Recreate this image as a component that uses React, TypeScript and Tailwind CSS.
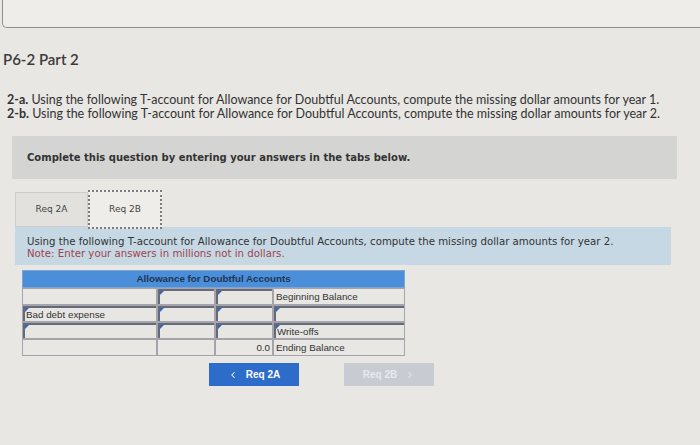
import { ChevronLeft, ChevronRight } from "lucide-react";

type Cell =
  | { kind: "blank" }
  | { kind: "input"; text?: string }
  | { kind: "label"; text: string }
  | { kind: "value"; text: string };

const rows: Cell[][] = [
  [{ kind: "blank" }, { kind: "input" }, { kind: "input" }, { kind: "label", text: "Beginning Balance" }],
  [{ kind: "input", text: "Bad debt expense" }, { kind: "input" }, { kind: "input" }, { kind: "input" }],
  [{ kind: "input" }, { kind: "input" }, { kind: "input" }, { kind: "input", text: "Write-offs" }],
  [{ kind: "blank" }, { kind: "blank" }, { kind: "value", text: "0.0" }, { kind: "label", text: "Ending Balance" }],
];

const colWidths = ["w-[135px]", "w-[58px]", "w-[58px]", "w-[132px]"];

function TCell({ cell, width }: { cell: Cell; width: string }) {
  if (cell.kind === "input") {
    return (
      <div className={`${width} h-[17px] border border-[#a3a5ab]`}>
        <div className="relative h-full border-l-2 border-t-2 border-[#646a7a] bg-[#e7e6e3] pl-[1px] leading-[13px] text-[9.8px] text-[#333]">
          <span className="absolute left-0 top-0 w-0 h-0 border-t-[4px] border-t-[#3b64b8] border-r-[4px] border-r-transparent" />
          {cell.text}
        </div>
      </div>
    );
  }
  return (
    <div
      className={`${width} h-[17px] border border-[#a3a5ab] px-[2px] leading-[15px] text-[9.8px] text-[#333] ${
        cell.kind === "value" ? "text-right" : ""
      }`}
    >
      {cell.kind === "blank" ? "" : cell.text}
    </div>
  );
}

export default function App() {
  return (
    <div className="w-[700px] h-[445px] overflow-hidden bg-[#e8e7e3] font-['Lato',sans-serif] text-[#333]">
      <div className="h-[28px] ml-[2px] bg-[#eeede9] border-l border-b border-[#8e8e8e] rounded-bl-[5px]" />

      <h1 className="mt-[22px] pl-[3px] text-[15px] font-semibold text-[#3b3b3b] leading-[18px]">
        P6-2 Part 2
      </h1>

      <div className="mt-[25px] pl-[7px] text-[12.5px] leading-[14px] text-[#333]">
        <p>
          <b>2-a.</b> Using the following T-account for Allowance for Doubtful Accounts, compute the missing dollar amounts for year 1.
        </p>
        <p>
          <b>2-b.</b> Using the following T-account for Allowance for Doubtful Accounts, compute the missing dollar amounts for year 2.
        </p>
      </div>

      <div className="mt-[15px] ml-[12px] w-[665px] h-[43px] bg-[#d4d4d2] flex items-center pl-[15px] font-['DejaVu_Sans',sans-serif] text-[10px] font-bold text-[#333]">
        Complete this question by entering your answers in the tabs below.
      </div>

      <div className="mt-[11px] ml-[15px] flex items-end font-['DejaVu_Sans',sans-serif] text-[9px] text-[#444]">
        <div className="w-[73px] h-[35px] bg-[#e2e1dd] border border-[#cfceca] flex items-center justify-center">
          Req 2A
        </div>
        <div className="relative z-10 -mb-[2px] w-[74px] h-[39px] bg-[#eeede9] border-2 border-dotted border-[#7b7b80] flex items-center justify-center">
          Req 2B
        </div>
      </div>

      <div className="ml-[15px] w-[656px] h-[38px] bg-[#c6d8e4] pl-[12px] pt-[9px] font-['DejaVu_Sans',sans-serif] text-[10.2px] leading-[12px]">
        <p className="text-[#333]">
          Using the following T-account for Allowance for Doubtful Accounts, compute the missing dollar amounts for year 2.
        </p>
        <p className="text-[#a2434d]">Note: Enter your answers in millions not in dollars.</p>
      </div>

      <div className="mt-[5px] ml-[22px] w-[383px] font-['Liberation_Sans',Arial,sans-serif]">
        <div className="h-[18px] bg-[#4b8fdb] border border-[#7ea3cf] text-center text-[9.8px] font-bold leading-[16px] text-[#1f3550]">
          Allowance for Doubtful Accounts
        </div>
        {rows.map((row, i) => (
          <div key={i} className="flex">
            {row.map((cell, j) => (
              <TCell key={j} cell={cell} width={colWidths[j]} />
            ))}
          </div>
        ))}
      </div>

      <div className="mt-[7px] flex font-['Liberation_Sans',Arial,sans-serif] text-[10px] font-bold">
        <button className="ml-[209px] w-[90px] h-[23px] bg-[#2d6cc9] text-white flex items-center justify-center gap-[8px]">
          <ChevronLeft size={10} strokeWidth={2.5} />
          Req 2A
        </button>
        <button className="ml-[45px] w-[90px] h-[23px] bg-[#c8ccd2] text-[#e6e9ee] flex items-center justify-center gap-[8px]">
          Req 2B
          <ChevronRight size={10} strokeWidth={2.5} />
        </button>
      </div>
    </div>
  );
}
